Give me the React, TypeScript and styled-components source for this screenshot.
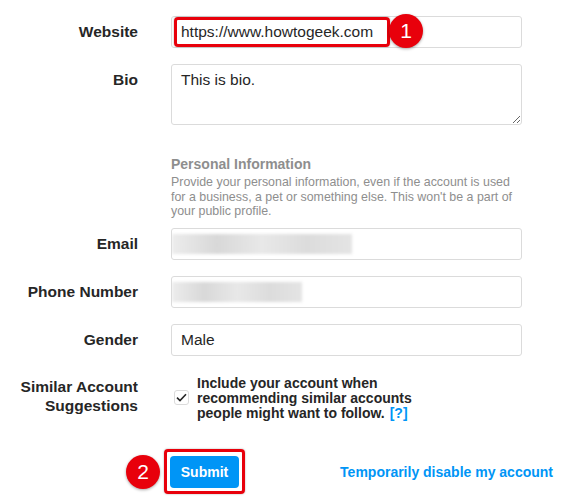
import styled, { createGlobalStyle } from "styled-components";

const GlobalStyle = createGlobalStyle`
  body {
    margin: 0;
    background: #ffffff;
    font-family: "Liberation Sans", Arial, sans-serif;
    color: #262626;
  }
`;

const Page = styled.div`
  width: 561px;
  height: 500px;
  padding-top: 16px;
  box-sizing: border-box;
  overflow: hidden;
`;

const Row = styled.div<{ $gap?: number }>`
  display: flex;
  align-items: flex-start;
  margin-bottom: ${(p) => p.$gap ?? 16}px;
`;

const Label = styled.label<{ $top?: number }>`
  width: 138px;
  flex-shrink: 0;
  text-align: right;
  font-size: 15.5px;
  font-weight: 700;
  line-height: 19px;
  color: #262626;
  padding-top: ${(p) => p.$top ?? 6}px;
`;

const Field = styled.div`
  position: relative;
  width: 351px;
  margin-left: 33px;
`;

const TextInput = styled.div`
  height: 32px;
  box-sizing: border-box;
  border: 1px solid #dbdbdb;
  border-radius: 3px;
  background: #ffffff;
  padding: 0 9px;
  display: flex;
  align-items: center;
  font-size: 15.5px;
  color: #262626;
  overflow: hidden;
`;

const TextArea = styled.textarea`
  display: block;
  width: 100%;
  height: 61px;
  box-sizing: border-box;
  border: 1px solid #dbdbdb;
  border-radius: 3px;
  padding: 6px 9px;
  font-family: "Liberation Sans", Arial, sans-serif;
  font-size: 15.5px;
  color: #262626;
  outline: none;
  resize: vertical;
`;

const Blurred = styled.div<{ $w: number }>`
  width: ${(p) => p.$w}px;
  height: 20px;
  margin-left: -9px;
  background: linear-gradient(90deg, #ececec, #d8d8d8 25%, #e8e8e8 50%, #dcdcdc 75%, #e4e4e4);
  filter: blur(1.5px);
`;

const Section = styled.div`
  margin-left: 171px;
  width: 348px;
  margin-bottom: 9px;
`;

const SectionTitle = styled.div`
  font-size: 14px;
  font-weight: 700;
  color: #8e8e8e;
  line-height: 18px;
  margin-top: -1px;
  margin-bottom: 2px;
`;

const SectionText = styled.div`
  font-size: 12.4px;
  line-height: 14.6px;
  color: #8e8e8e;
`;

const CheckLine = styled.div`
  display: flex;
  align-items: flex-start;
  gap: 8px;
  padding-left: 3px;
`;

const CheckBox = styled.div`
  width: 15px;
  height: 15px;
  margin-top: 14px;
  flex-shrink: 0;
  border: 1px solid #dbdbdb;
  border-radius: 3px;
  box-sizing: border-box;
  display: flex;
  align-items: center;
  justify-content: center;
`;

const CheckText = styled.div`
  font-size: 14px;
  font-weight: 700;
  line-height: 15px;
  color: #262626;
  width: 230px;
`;

const HelpLink = styled.span`
  display: inline-block;
  line-height: 15px;
  color: #0095f6;
  margin-left: 5px;
`;

const SubmitRow = styled.div`
  display: flex;
  align-items: center;
  justify-content: space-between;
  width: 383px;
  margin-left: 170px;
  margin-top: 35px;
`;

const ButtonWrap = styled.div`
  position: relative;
`;

const Button = styled.button`
  height: 32px;
  width: 69px;
  padding: 0;
  border: none;
  border-radius: 4px;
  background: #0095f6;
  color: #ffffff;
  font-family: "Liberation Sans", Arial, sans-serif;
  font-size: 14px;
  font-weight: 700;
  display: block;
`;

const HighlightBox = styled.div<{ $l: number; $t: number; $w: number; $h: number }>`
  position: absolute;
  left: ${(p) => p.$l}px;
  top: ${(p) => p.$t}px;
  width: ${(p) => p.$w}px;
  height: ${(p) => p.$h}px;
  box-sizing: border-box;
  border: 3px solid #e8000b;
  border-radius: 4px;
  box-shadow: 0 0 2px rgba(0, 0, 0, 0.35);
  pointer-events: none;
`;

const Marker = styled.div<{ $l: number; $t: number }>`
  position: absolute;
  left: ${(p) => p.$l}px;
  top: ${(p) => p.$t}px;
  width: 34px;
  height: 34px;
  border-radius: 50%;
  background: #e8000b;
  box-shadow: 0 1px 3px rgba(0, 0, 0, 0.35);
  color: #ffffff;
  font-family: "Liberation Sans", Arial, sans-serif;
  font-size: 21px;
  display: flex;
  align-items: center;
  justify-content: center;
`;

const DisableLink = styled.a`
  color: #0095f6;
  font-size: 14px;
  font-weight: 700;
  text-decoration: none;
`;

export default function App() {
  return (
    <>
      <GlobalStyle />
      <Page>
        <Row>
          <Label $top={6}>Website</Label>
          <Field>
            <TextInput>https://www.howtogeek.com</TextInput>
            <HighlightBox $l={3} $t={1} $w={216} $h={30} />
            <Marker $l={218} $t={-2}>1</Marker>
          </Field>
        </Row>
        <Row $gap={31}>
          <Label $top={6}>Bio</Label>
          <Field>
            <TextArea readOnly value="This is bio." />
          </Field>
        </Row>
        <Section>
          <SectionTitle>Personal Information</SectionTitle>
          <SectionText>
            Provide your personal information, even if the account is used for a business, a pet
            or something else. This won't be a part of your public profile.
          </SectionText>
        </Section>
        <Row>
          <Label>Email</Label>
          <Field>
            <TextInput>
              <Blurred $w={180} />
            </TextInput>
          </Field>
        </Row>
        <Row>
          <Label>Phone Number</Label>
          <Field>
            <TextInput>
              <Blurred $w={130} />
            </TextInput>
          </Field>
        </Row>
        <Row $gap={20}>
          <Label>Gender</Label>
          <Field>
            <TextInput>Male</TextInput>
          </Field>
        </Row>
        <Row $gap={0}>
          <Label $top={1}>
            Similar Account
            <br />
            Suggestions
          </Label>
          <Field>
            <CheckLine>
              <CheckBox>
                <svg width="11" height="9" viewBox="0 0 11 9">
                  <path d="M1 4.6 L4 7.6 L10 1.2" fill="none" stroke="#262626" strokeWidth="1.6" />
                </svg>
              </CheckBox>
              <CheckText>
                Include your account when recommending similar accounts people might want to
                follow.<HelpLink>[?]</HelpLink>
              </CheckText>
            </CheckLine>
          </Field>
        </Row>
        <SubmitRow>
          <ButtonWrap>
            <Button>Submit</Button>
            <HighlightBox $l={-6} $t={-7} $w={81} $h={45} />
            <Marker $l={-44} $t={-1}>2</Marker>
          </ButtonWrap>
          <DisableLink href="#">Temporarily disable my account</DisableLink>
        </SubmitRow>
      </Page>
    </>
  );
}
